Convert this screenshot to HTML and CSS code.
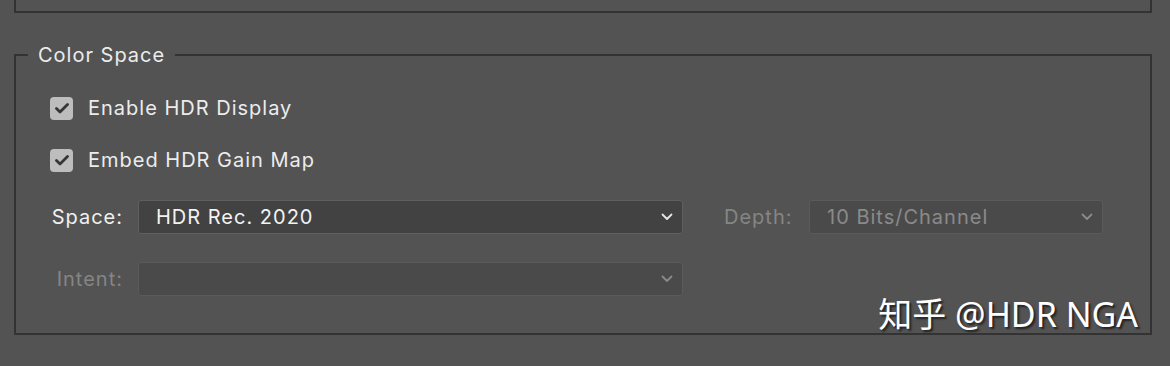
FILE: index.html
```html
<!DOCTYPE html>
<html>
<head>
	<meta charset="utf-8">
	<title>Color Space</title>
	<link rel="stylesheet" href="styles.css">
</head>
<body>
	<div class="panel_top"></div>

	<fieldset class="group">
		<legend>Color Space</legend>

		<label class="check">
			<span class="box"><svg width="14" height="11" viewBox="0 0 14 11"><path d="M1.5 5.5 L5 9 L12.5 1.5" fill="none" stroke="#363636" stroke-width="2.8" stroke-linecap="round" stroke-linejoin="round"/></svg></span>
			Enable HDR Display
		</label>
		<label class="check">
			<span class="box"><svg width="14" height="11" viewBox="0 0 14 11"><path d="M1.5 5.5 L5 9 L12.5 1.5" fill="none" stroke="#363636" stroke-width="2.8" stroke-linecap="round" stroke-linejoin="round"/></svg></span>
			Embed HDR Gain Map
		</label>

		<div class="row first">
			<span class="lbl">Space:</span>
			<div class="select wide"><span>HDR Rec. 2020</span><svg class="chev" width="12" height="8" viewBox="0 0 12 8"><path d="M1.5 1.5 L6 6 L10.5 1.5" fill="none" stroke="#e6e6e6" stroke-width="1.8" stroke-linecap="round" stroke-linejoin="round"/></svg></div>
			<span class="lbl off depth">Depth:</span>
			<div class="select narrow off"><span>10 Bits/Channel</span><svg class="chev" width="12" height="8" viewBox="0 0 12 8"><path d="M1.5 1.5 L6 6 L10.5 1.5" fill="none" stroke="#8a8a8a" stroke-width="1.8" stroke-linecap="round" stroke-linejoin="round"/></svg></div>
		</div>
		<div class="row">
			<span class="lbl off">Intent:</span>
			<div class="select wide off"><span></span><svg class="chev" width="12" height="8" viewBox="0 0 12 8"><path d="M1.5 1.5 L6 6 L10.5 1.5" fill="none" stroke="#8a8a8a" stroke-width="1.8" stroke-linecap="round" stroke-linejoin="round"/></svg></div>
		</div>

		<div class="mark">知乎 @HDR NGA</div>
	</fieldset>
</body>
</html>
```

FILE: styles.css
```css
body{margin:0;padding:0;background:#535353;font-family:Inter,"Noto Sans","Noto Sans CJK SC",sans-serif;color:#e8e8e8;letter-spacing:1px;}
.panel_top{margin-left:14px;width:1134px;height:11px;border:2px solid #333;border-top:none;}
.group{position:relative;margin:30px 0 0 14px;width:1134px;height:288px;padding:0;border:2px solid #333;box-sizing:content-box;}
.group legend{margin-left:12px;padding:0 10px;font-size:20px;color:#ececec;}
.check{display:flex;align-items:center;height:24px;margin-left:34px;font-size:20px;color:#ececec;}
.check:first-of-type{margin-top:29px;}
.check + .check{margin-top:28px;}
.box{width:23px;height:23px;border-radius:4px;background:#bdbdbd;display:flex;align-items:center;justify-content:center;margin-right:15px;}
.row{display:flex;align-items:center;height:34px;margin-top:28px;}
.lbl{width:107px;text-align:right;font-size:20px;color:#f0f0f0;}
.lbl.off{color:#858585;}
.lbl.depth{width:85px;margin-left:41px;text-align:left;}
.select{display:flex;align-items:center;justify-content:space-between;box-sizing:border-box;height:34px;margin-left:15px;padding:0 9px 0 17px;border:1px solid #5f5f5f;border-radius:3px;background:#424242;font-size:20px;color:#f2f2f2;}
.select.wide{width:545px;}
.select.narrow{width:294px;margin-left:0;}
.select.off{background:#4a4a4a;border-color:#5a5a5a;color:#8a8a8a;}
.chev{display:block;}
.mark{position:absolute;right:12px;bottom:-4px;font-family:"Noto Sans","Noto Sans CJK SC",sans-serif;font-size:34px;letter-spacing:0;color:#fff;text-shadow:2px 2px 2px #222;}
```
